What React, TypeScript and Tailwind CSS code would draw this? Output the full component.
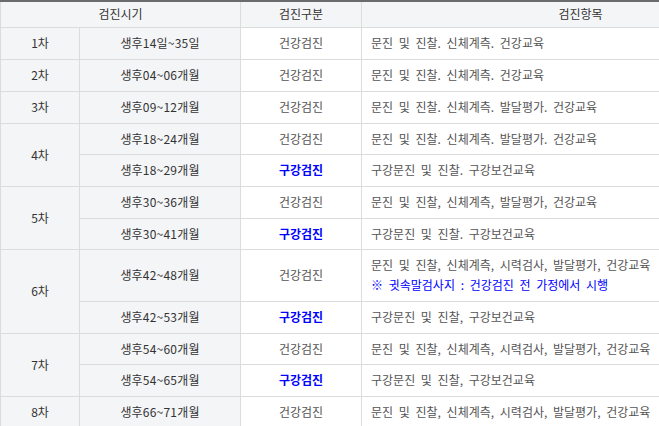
import React from 'react';

type SubRow = {
  period: string;
  type: string;
  oral?: boolean;
  items: string;
  note?: string;
  h: number;
};

type Round = {
  label: string;
  rows: SubRow[];
};

const rounds: Round[] = [
  { label: '1차', rows: [{ period: '생후14일~35일', type: '건강검진', items: '문진 및 진찰. 신체계측. 건강교육', h: 32 }] },
  { label: '2차', rows: [{ period: '생후04~06개월', type: '건강검진', items: '문진 및 진찰. 신체계측. 건강교육', h: 32 }] },
  { label: '3차', rows: [{ period: '생후09~12개월', type: '건강검진', items: '문진 및 진찰. 신체계측. 발달평가. 건강교육', h: 32 }] },
  {
    label: '4차',
    rows: [
      { period: '생후18~24개월', type: '건강검진', items: '문진 및 진찰. 신체계측. 발달평가. 건강교육', h: 31 },
      { period: '생후18~29개월', type: '구강검진', oral: true, items: '구강문진 및 진찰. 구강보건교육', h: 32 },
    ],
  },
  {
    label: '5차',
    rows: [
      { period: '생후30~36개월', type: '건강검진', items: '문진 및 진찰, 신체계측, 발달평가, 건강교육', h: 32 },
      { period: '생후30~41개월', type: '구강검진', oral: true, items: '구강문진 및 진찰. 구강보건교육', h: 31 },
    ],
  },
  {
    label: '6차',
    rows: [
      {
        period: '생후42~48개월',
        type: '건강검진',
        items: '문진 및 진찰, 신체계측, 시력검사, 발달평가, 건강교육',
        note: '※ 귓속말검사지 : 건강검진 전 가정에서 시행',
        h: 52,
      },
      { period: '생후42~53개월', type: '구강검진', oral: true, items: '구강문진 및 진찰, 구강보건교육', h: 32 },
    ],
  },
  {
    label: '7차',
    rows: [
      { period: '생후54~60개월', type: '건강검진', items: '문진 및 진찰, 신체계측, 시력검사, 발달평가, 건강교육', h: 31 },
      { period: '생후54~65개월', type: '구강검진', oral: true, items: '구강문진 및 진찰, 구강보건교육', h: 32 },
    ],
  },
  {
    label: '8차',
    rows: [{ period: '생후66~71개월', type: '건강검진', items: '문진 및 진찰, 신체계측, 시력검사, 발달평가, 건강교육', h: 32 }],
  },
];

const cell = 'border border-[#dcdcdc] p-0 align-middle';

const App: React.FC = () => {
  return (
    <div
      className="w-[659px] h-[426px] overflow-hidden bg-white text-[12px] text-[#444]"
      style={{ fontFamily: '"Malgun Gothic", "Noto Sans CJK KR", sans-serif' }}
    >
      <table className="w-[800px] table-fixed border-collapse border-t-2 border-t-[#6b6b6b]">
        <colgroup>
          <col className="w-[79px]" />
          <col className="w-[161px]" />
          <col className="w-[121px]" />
          <col />
        </colgroup>
        <thead>
          <tr className="h-[26px] bg-[#f4f5f7] text-[#333]">
            <th colSpan={2} className={`${cell} border-t-0 font-normal text-center`}>검진시기</th>
            <th className={`${cell} border-t-0 font-normal text-center`}>검진구분</th>
            <th className={`${cell} border-t-0 font-normal text-center`}>검진항목</th>
          </tr>
        </thead>
        <tbody>
          {rounds.map(round =>
            round.rows.map((row, i) => (
              <tr key={round.label + i} style={{ height: row.h }}>
                {i === 0 && (
                  <td rowSpan={round.rows.length} className={`${cell} bg-[#f4f5f7] text-center text-[#333]`}>
                    {round.label}
                  </td>
                )}
                <td className={`${cell} bg-[#f4f5f7] text-center text-[#333] tracking-[0.2px]`}>{row.period}</td>
                <td className={`${cell} text-center ${row.oral ? 'font-bold text-[#0000ff]' : 'text-[#555]'}`}>
                  {row.type}
                </td>
                <td className={`${cell} pl-[9px] text-[#555] leading-[20px] [word-spacing:3px]`}>
                  <div>{row.items}</div>
                  {row.note && <div className="text-[#0000ff]">{row.note}</div>}
                </td>
              </tr>
            ))
          )}
        </tbody>
      </table>
    </div>
  );
};

export default App;
